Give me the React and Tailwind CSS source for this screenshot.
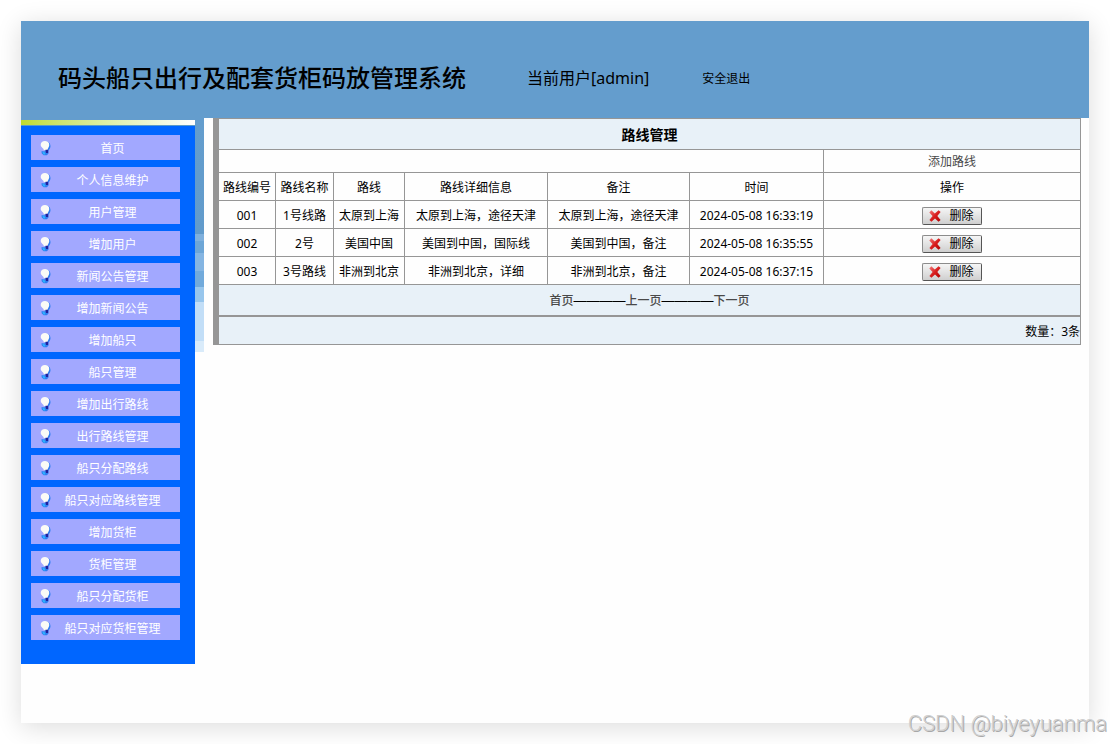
import React from 'react';

const menuItems = [
  '首页',
  '个人信息维护',
  '用户管理',
  '增加用户',
  '新闻公告管理',
  '增加新闻公告',
  '增加船只',
  '船只管理',
  '增加出行路线',
  '出行路线管理',
  '船只分配路线',
  '船只对应路线管理',
  '增加货柜',
  '货柜管理',
  '船只分配货柜',
  '船只对应货柜管理'
];

const columns = ['路线编号', '路线名称', '路线', '路线详细信息', '备注', '时间', '操作'];

const routes = [
  { id: '001', name: '1号线路', route: '太原到上海', detail: '太原到上海，途径天津', remark: '太原到上海，途径天津', time: '2024-05-08 16:33:19' },
  { id: '002', name: '2号', route: '美国中国', detail: '美国到中国，国际线', remark: '美国到中国，备注', time: '2024-05-08 16:35:55' },
  { id: '003', name: '3号路线', route: '非洲到北京', detail: '非洲到北京，详细', remark: '非洲到北京，备注', time: '2024-05-08 16:37:15' }
];

const cell = 'border-r border-b border-[#969696] px-0 pt-0.5 pb-0 text-center font-normal whitespace-nowrap';

const BulbIcon = () => (
  <svg className="w-3 h-4 shrink-0" viewBox="0 0 12 16" aria-hidden="true">
    <path d="M6.500 1.600c3 0 5 2 5 4.600 0 2-1.300 3-2 4.600v2.600L7.900 15.200H4.600L2.600 13.200V11l3 .5V9L3 6z" fill="#2f7df0" />
    <path d="M6 1C8.500 1 10.300 2.600 10.300 4.900c0 2-1.500 2.900-1.900 5.300H4.900C4.700 8 1.700 7.300 1.700 4.700 1.700 2.500 3.500 1 6 1z" fill="#fbfbf6" />
    <path d="M6.500 9.800h2.600v3.200H7z" fill="#20209c" />
    <path d="M3.200 11.300l2.900 1.500v1.600H4.400z" fill="#2cb4ff" />
  </svg>
);

const DeleteIcon = () => (
  <svg className="w-3 h-3 shrink-0" viewBox="0 0 12 12" aria-hidden="true">
    <defs>
      <linearGradient id="cross" x1="0" y1="0" x2="1" y2="1">
        <stop offset="0" stopColor="#f47c7c" />
        <stop offset="0.5" stopColor="#d81e1e" />
        <stop offset="1" stopColor="#b00000" />
      </linearGradient>
    </defs>
    <path d="M2.300 0.300L5.800 3.400 9.600 0.300l2 1.700L8.300 6l3.300 4-2.100 1.800L6 8.500l-3.600 3.200L0.400 10 3.600 6 0.300 2.400z" fill="url(#cross)" />
  </svg>
);

const Header = () => (
  <header className="h-[97px] shrink-0 bg-[#649dcd] pl-[37px] pt-4 flex items-center">
    <h1 className="pb-0.5 text-2xl leading-8 font-medium whitespace-nowrap font-[LiSu,'Noto_Sans_CJK_SC',sans-serif]">
      码头船只出行及配套货柜码放管理系统
    </h1>
    <span className="ml-[61px] text-base leading-6 whitespace-nowrap">当前用户[admin]</span>
    <a href="#logout" className="ml-[53px] pt-0.5 whitespace-nowrap">安全退出</a>
  </header>
);

const Sidebar = () => (
  <aside className="w-[174px] shrink-0">
    <div className="h-0.5 bg-[#649dcd]" />
    <div className="h-[5px] bg-linear-to-r from-[#bfdc2c] to-white" />
    <nav className="border-t border-[#5a9ac8] bg-[#0066ff] pt-[9px] pb-6 pl-2.5 pr-[15px] flex flex-col gap-[7px]">
      {menuItems.map((item) => (
        <a
          key={item}
          href="#menu"
          className="h-[25px] bg-[#a2a8ff] pl-2 pr-1.5 flex items-center text-white whitespace-nowrap"
        >
          <BulbIcon />
          <span className="flex-1 pt-0.5 text-center">{item}</span>
        </a>
      ))}
    </nav>
  </aside>
);

// Sky strip between the menu and the content
const SkyStrip = () => (
  <div className="w-[9px] shrink-0">
    <div className="h-[116px] bg-linear-to-b from-[#649dcd] to-[#629bcb]" />
    <div className="h-[7px] bg-[#7fb0dd]" />
    <div className="h-3 bg-[#6ea6d6]" />
    <div className="h-[18px] bg-[#85b5e2]" />
    <div className="h-4 bg-[#72aadb]" />
    <div className="h-[15px] bg-[#98c6ec]" />
    <div className="h-[39px] bg-[#c2def7]" />
    <div className="h-[11px] bg-[#d9ebfa]" />
  </div>
);

const PagerDash = () => (
  <span className="text-[13px] font-normal font-['Liberation_Sans',sans-serif]">————</span>
);

const RouteTable = () => (
  <main className="flex-1 min-w-0 pl-[9px] pr-2">
    <div className="border-l-6 border-t border-[#969696]">
      <table className="w-full table-fixed border-separate border-spacing-0">
        <colgroup>
          <col className="w-[57px]" />
          <col className="w-[58px]" />
          <col className="w-[71px]" />
          <col className="w-[143px]" />
          <col className="w-[142px]" />
          <col className="w-[134px]" />
          <col />
        </colgroup>
        <thead>
          <tr className="h-[31px] bg-[#e8f1f8]">
            <th colSpan={7} className={cell}>
              <span className="text-sm font-bold">路线管理</span>
            </th>
          </tr>
          <tr className="h-[23px]">
            <td colSpan={6} className={cell} />
            <td className={cell}>
              <a href="#add" className="text-[#494949]">添加路线</a>
            </td>
          </tr>
          <tr className="h-7">
            {columns.map((title) => (
              <th key={title} scope="col" className={cell}>{title}</th>
            ))}
          </tr>
        </thead>
        <tbody>
          {routes.map((row) => (
            <tr key={row.id} className="h-7">
              <td className={cell}>{row.id}</td>
              <td className={cell}>{row.name}</td>
              <td className={cell}>{row.route}</td>
              <td className={cell}>{row.detail}</td>
              <td className={cell}>{row.remark}</td>
              <td className={cell}>{row.time}</td>
              <td className={cell}>
                <button
                  type="button"
                  className="h-[18px] pl-1.5 pr-[7px] inline-flex items-center gap-2 align-middle rounded-xs border border-[#8c8c8c] border-r-[#555555] border-b-[#555555] bg-linear-to-b from-[#f6f6f6] to-[#cfcfcf]"
                >
                  <DeleteIcon />
                  <span className="pt-px">删除</span>
                </button>
              </td>
            </tr>
          ))}
        </tbody>
      </table>
      <div className="h-8 pt-0.5 border-r border-b-2 border-[#969696] bg-[#e8f1f8] flex items-center justify-center font-medium">
        <a href="#first" className="text-[#494949]">首页</a>
        <PagerDash />
        <a href="#prev" className="text-[#494949]">上一页</a>
        <PagerDash />
        <a href="#next" className="text-[#494949]">下一页</a>
      </div>
      <div className="h-7 pt-0.5 border-r border-b border-[#969696] bg-[#e8f1f8] flex items-center justify-end">
        数量：3条
      </div>
    </div>
  </main>
);

export default function App() {
  return (
    <div className="relative min-h-screen bg-white p-[21px] flex flex-col text-xs leading-4 text-black font-['Noto_Sans','Noto_Sans_CJK_SC',sans-serif]">
      <div className="flex-1 flex flex-col bg-[#fefefe] shadow-[0_4px_24px_rgba(0,0,0,0.14)]">
        <Header />
        <div className="flex-1 flex items-start">
          <Sidebar />
          <SkyStrip />
          <RouteTable />
        </div>
      </div>
      <div className="absolute right-[3px] bottom-1.5 text-[22px] leading-7 font-light text-[#cfcfcf] [text-shadow:1px_1px_0_#a8a8a8] font-[Roboto,sans-serif]">
        CSDN @biyeyuanma
      </div>
    </div>
  );
}
